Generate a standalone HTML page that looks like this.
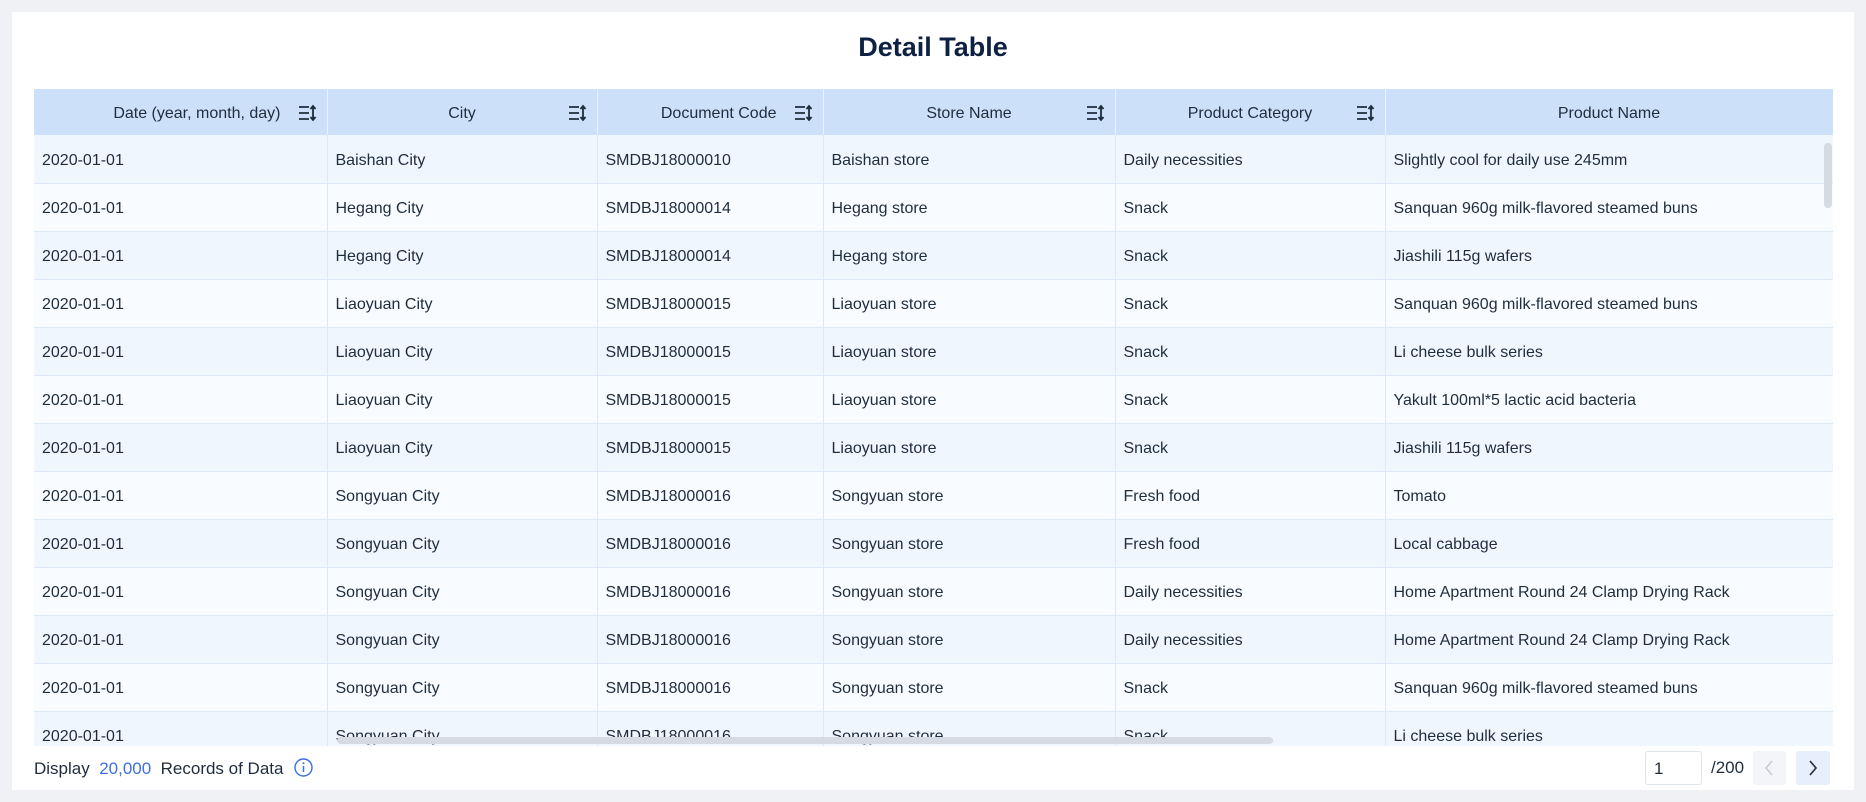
<!DOCTYPE html>
<html><head><meta charset="utf-8"><style>
*{margin:0;padding:0;box-sizing:border-box}
body{width:1866px;height:802px;background:#eff1f5;font-family:"Liberation Sans","Noto Sans CJK SC",sans-serif;position:relative;overflow:hidden;color:#1f2d3d}
.card{position:absolute;left:12px;top:12px;width:1842px;height:778px;background:#fff}
.title{position:absolute;left:0;right:0;top:32px;text-align:center;font-size:27px;font-weight:bold;color:#0f2142}
.tbl{position:absolute;left:34px;top:89px;width:1799px;height:657px;overflow:hidden}
table{border-collapse:collapse;table-layout:fixed;width:1799px}
th{background:#cde0fa;height:46px;font-weight:normal;font-size:16px;border-right:1px solid #eaf2fd;position:relative;color:#1f2d3d;padding-top:3px}
td{height:48px;font-size:16px;padding-left:8px;padding-top:4px;border-right:1px solid #dde9f8;border-bottom:1px solid #dde9f8;white-space:nowrap;overflow:hidden}
tr:nth-child(even) td{background:#f0f6fe}
tr:nth-child(odd) td{background:#f8fbff}
.ic{position:absolute;right:10px;top:14px}
.vs{position:absolute;left:1824px;top:143px;width:8px;height:65px;background:#d6dbe3;border-radius:4px}
.hs{position:absolute;left:337px;top:737px;width:936px;height:7px;background:#d6dbe3;border-radius:4px}
.foot{position:absolute;left:34px;top:758px;font-size:17px;color:#1f2d3d}
.foot b{font-weight:normal;color:#3d6fe0}
</style></head><body>
<div class="card"></div>
<div class="title">Detail Table</div>
<div class="tbl"><table>
<colgroup><col style="width:293px"><col style="width:270px"><col style="width:226px"><col style="width:292px"><col style="width:270px"><col style="width:448px"></colgroup>
<tr>
<th style="text-align:right;padding-right:46px">Date (year, month, day)<svg class="ic" width="20" height="20" viewBox="0 0 20 20"><g stroke="#1f2d3d" stroke-width="1.8" fill="none"><path d="M2 4h10M2 10h10M2 16h10M16 3v14M13.5 6l2.5-3 2.5 3M13.5 14l2.5 3 2.5-3"/></g></svg></th>
<th>City<svg class="ic" width="20" height="20" viewBox="0 0 20 20"><g stroke="#1f2d3d" stroke-width="1.8" fill="none"><path d="M2 4h10M2 10h10M2 16h10M16 3v14M13.5 6l2.5-3 2.5 3M13.5 14l2.5 3 2.5-3"/></g></svg></th>
<th style="text-align:right;padding-right:46px">Document Code<svg class="ic" width="20" height="20" viewBox="0 0 20 20"><g stroke="#1f2d3d" stroke-width="1.8" fill="none"><path d="M2 4h10M2 10h10M2 16h10M16 3v14M13.5 6l2.5-3 2.5 3M13.5 14l2.5 3 2.5-3"/></g></svg></th>
<th>Store Name<svg class="ic" width="20" height="20" viewBox="0 0 20 20"><g stroke="#1f2d3d" stroke-width="1.8" fill="none"><path d="M2 4h10M2 10h10M2 16h10M16 3v14M13.5 6l2.5-3 2.5 3M13.5 14l2.5 3 2.5-3"/></g></svg></th>
<th>Product Category<svg class="ic" width="20" height="20" viewBox="0 0 20 20"><g stroke="#1f2d3d" stroke-width="1.8" fill="none"><path d="M2 4h10M2 10h10M2 16h10M16 3v14M13.5 6l2.5-3 2.5 3M13.5 14l2.5 3 2.5-3"/></g></svg></th>
<th>Product Name</th>
</tr>
<tr><td>2020-01-01</td><td>Baishan City</td><td>SMDBJ18000010</td><td>Baishan store</td><td>Daily necessities</td><td>Slightly cool for daily use 245mm</td></tr>
<tr><td>2020-01-01</td><td>Hegang City</td><td>SMDBJ18000014</td><td>Hegang store</td><td>Snack</td><td>Sanquan 960g milk-flavored steamed buns</td></tr>
<tr><td>2020-01-01</td><td>Hegang City</td><td>SMDBJ18000014</td><td>Hegang store</td><td>Snack</td><td>Jiashili 115g wafers</td></tr>
<tr><td>2020-01-01</td><td>Liaoyuan City</td><td>SMDBJ18000015</td><td>Liaoyuan store</td><td>Snack</td><td>Sanquan 960g milk-flavored steamed buns</td></tr>
<tr><td>2020-01-01</td><td>Liaoyuan City</td><td>SMDBJ18000015</td><td>Liaoyuan store</td><td>Snack</td><td>Li cheese bulk series</td></tr>
<tr><td>2020-01-01</td><td>Liaoyuan City</td><td>SMDBJ18000015</td><td>Liaoyuan store</td><td>Snack</td><td>Yakult 100ml*5 lactic acid bacteria</td></tr>
<tr><td>2020-01-01</td><td>Liaoyuan City</td><td>SMDBJ18000015</td><td>Liaoyuan store</td><td>Snack</td><td>Jiashili 115g wafers</td></tr>
<tr><td>2020-01-01</td><td>Songyuan City</td><td>SMDBJ18000016</td><td>Songyuan store</td><td>Fresh food</td><td>Tomato</td></tr>
<tr><td>2020-01-01</td><td>Songyuan City</td><td>SMDBJ18000016</td><td>Songyuan store</td><td>Fresh food</td><td>Local cabbage</td></tr>
<tr><td>2020-01-01</td><td>Songyuan City</td><td>SMDBJ18000016</td><td>Songyuan store</td><td>Daily necessities</td><td>Home Apartment Round 24 Clamp Drying Rack</td></tr>
<tr><td>2020-01-01</td><td>Songyuan City</td><td>SMDBJ18000016</td><td>Songyuan store</td><td>Daily necessities</td><td>Home Apartment Round 24 Clamp Drying Rack</td></tr>
<tr><td>2020-01-01</td><td>Songyuan City</td><td>SMDBJ18000016</td><td>Songyuan store</td><td>Snack</td><td>Sanquan 960g milk-flavored steamed buns</td></tr>
<tr><td>2020-01-01</td><td>Songyuan City</td><td>SMDBJ18000016</td><td>Songyuan store</td><td>Snack</td><td>Li cheese bulk series</td></tr>
</table></div>
<div class="vs"></div>
<div class="hs"></div>
<div class="foot">Display &nbsp;<b>20,000</b>&nbsp; Records of Data <svg style="vertical-align:-3px;margin-left:6px" width="19" height="19" viewBox="0 0 19 19"><circle cx="9.5" cy="9.5" r="8.5" fill="none" stroke="#3d6fe0" stroke-width="1.4"/><circle cx="9.5" cy="5.2" r="1" fill="#3d6fe0"/><path d="M9.5 8v6" stroke="#3d6fe0" stroke-width="1.5"/></svg></div>
<div style="position:absolute;left:1645px;top:751px;width:57px;height:34px;border:1px solid #dfe3ea;border-radius:3px;font-size:17px;padding:7px 0 0 8px">1</div>
<div style="position:absolute;left:1711px;top:758px;font-size:17px">/200</div>
<div style="position:absolute;left:1753px;top:751px;width:33px;height:34px;background:#f3f5f8;border-radius:3px"><svg width="33" height="34" viewBox="0 0 33 34"><path d="M19 10l-6 7 6 7" stroke="#c5cad3" stroke-width="1.5" fill="none"/></svg></div>
<div style="position:absolute;left:1796px;top:751px;width:34px;height:34px;background:#e6effb;border-radius:3px"><svg width="34" height="34" viewBox="0 0 34 34"><path d="M14 10l6 7-6 7" stroke="#1f2d3d" stroke-width="1.6" fill="none"/></svg></div>
</body></html>
